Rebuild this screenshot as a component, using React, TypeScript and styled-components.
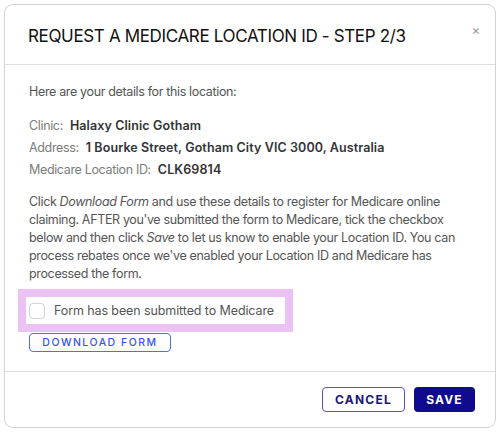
import React from "react";
import styled, { createGlobalStyle } from "styled-components";

const GlobalStyle = createGlobalStyle`
  html, body {
    margin: 0;
    padding: 0;
    background: #ffffff;
  }
  body {
    font-family: Inter, "Noto Sans", sans-serif;
    -webkit-font-smoothing: antialiased;
  }
`;

const SPage = styled.div`
  padding: 4px;
`;

const SModal = styled.div`
  width: 490px;
  height: 422px;
  border: 1px solid #d4d4d4;
  border-radius: 9px;
  background: #fff;
  display: flex;
  flex-direction: column;
  overflow: hidden;
`;

const SHeader = styled.div`
  display: flex;
  align-items: flex-start;
  justify-content: space-between;
  padding: 19px 15px 0 23px;
  height: 40px;
  border-bottom: 1px solid #dedede;
`;

const STitle = styled.h2`
  margin: 0;
  font-size: 17px;
  line-height: 24px;
  font-weight: 400;
  letter-spacing: -0.35px;
  color: #111;
`;

const SClose = styled.button`
  border: none;
  background: none;
  padding: 0;
  margin-top: -2px;
  font-size: 13px;
  line-height: 16px;
  color: #9a9a9a;
  cursor: pointer;
  font-family: inherit;
`;

const SBody = styled.div`
  flex: 1;
  padding: 18px 24px 0 24px;
  font-size: 12.5px;
  letter-spacing: -0.35px;
  color: #555;
`;

const SIntro = styled.p`
  margin: 0 0 14px;
  line-height: 18px;
`;

const SDetails = styled.div`
  display: flex;
  flex-direction: column;
  margin-bottom: 12px;
`;

const SDetailRow = styled.div`
  line-height: 22px;
`;

const SLabel = styled.span`
  color: #7c7c7c;
  margin-right: 7px;
`;

const SValue = styled.span`
  color: #333;
  font-weight: 600;
  letter-spacing: 0.1px;
`;

const SText = styled.p`
  margin: 0;
  line-height: 18px;
`;

const SCheckRow = styled.label`
  display: inline-flex;
  align-items: center;
  gap: 9px;
  height: 27px;
  margin: 14px 0 0 -3px;
  padding: 0 11px 0 3px;
  outline: 8px solid #ecc1f4;
  cursor: pointer;
`;

const SCheckBox = styled.span`
  width: 14px;
  height: 14px;
  border: 1px solid #cfd3da;
  border-radius: 4px;
  background: #fff;
`;

const SCheckText = styled.span`
  color: #555;
  line-height: 18px;
  letter-spacing: -0.1px;
`;

const SButtonRow = styled.div`
  margin-top: 9px;
`;

const SOutlineButton = styled.button<{ $tone: "blue" | "navy" }>`
  font-family: inherit;
  background: #fff;
  border: 1px solid ${(p) => (p.$tone === "blue" ? "#4f6cf7" : "#5a50c6")};
  color: ${(p) => (p.$tone === "blue" ? "#3552f2" : "#1c1677")};
  border-radius: 4px;
  font-weight: ${(p) => (p.$tone === "blue" ? 500 : 700)};
  letter-spacing: ${(p) => (p.$tone === "blue" ? "1.5px" : "1.2px")};
  cursor: pointer;
`;

const SDownload = styled(SOutlineButton)`
  height: 19px;
  width: 142px;
  padding: 0;
  font-size: 10.5px;
  line-height: 17px;
`;

const SFooter = styled.div`
  height: 55px;
  border-top: 1px solid #dedede;
  display: flex;
  align-items: center;
  justify-content: flex-end;
  gap: 9px;
  padding-right: 20px;
`;

const SCancel = styled(SOutlineButton)`
  height: 25px;
  width: 83px;
  font-size: 12px;
  padding: 0;
`;

const SSave = styled.button`
  height: 25px;
  width: 61px;
  padding: 0;
  border: none;
  border-radius: 4px;
  background: #100b8c;
  color: #fff;
  font-family: inherit;
  font-size: 12px;
  font-weight: 700;
  letter-spacing: 1.2px;
  cursor: pointer;
`;

const details = [
  { label: "Clinic:", value: "Halaxy Clinic Gotham" },
  { label: "Address:", value: "1 Bourke Street, Gotham City VIC 3000, Australia" },
  { label: "Medicare Location ID:", value: "CLK69814" },
];

export default function App() {
  return (
    <SPage>
      <GlobalStyle />
      <SModal>
        <SHeader>
          <STitle>REQUEST A MEDICARE LOCATION ID - STEP 2/3</STitle>
          <SClose aria-label="Close">×</SClose>
        </SHeader>
        <SBody>
          <SIntro>Here are your details for this location:</SIntro>
          <SDetails>
            {details.map((d) => (
              <SDetailRow key={d.label}>
                <SLabel>{d.label}</SLabel>
                <SValue>{d.value}</SValue>
              </SDetailRow>
            ))}
          </SDetails>
          <SText>
            Click <em>Download Form</em> and use these details to register for
            Medicare online claiming. AFTER you've submitted the form to
            Medicare, tick the checkbox below and then click <em>Save</em> to
            let us know to enable your Location ID. You can process rebates
            once we've enabled your Location ID and Medicare has processed the
            form.
          </SText>
          <SCheckRow>
            <SCheckBox />
            <SCheckText>Form has been submitted to Medicare</SCheckText>
          </SCheckRow>
          <SButtonRow>
            <SDownload $tone="blue">DOWNLOAD FORM</SDownload>
          </SButtonRow>
        </SBody>
        <SFooter>
          <SCancel $tone="navy">CANCEL</SCancel>
          <SSave>SAVE</SSave>
        </SFooter>
      </SModal>
    </SPage>
  );
}
